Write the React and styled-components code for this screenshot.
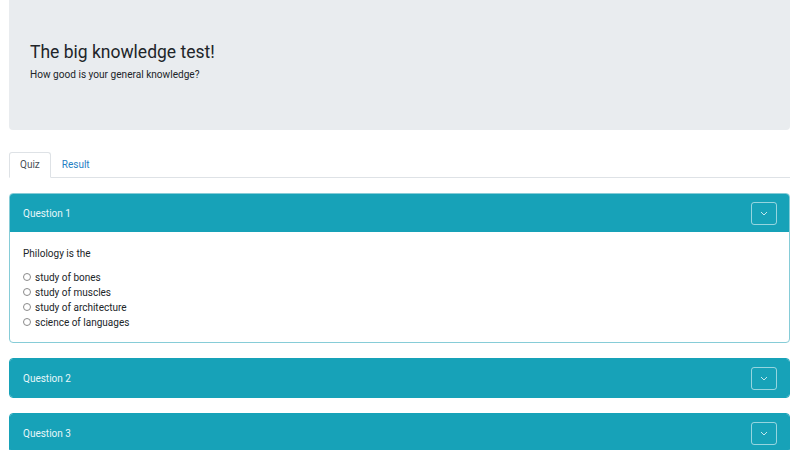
import React from "react";
import styled, { createGlobalStyle } from "styled-components";

const Global = createGlobalStyle`
  html, body { margin: 0; padding: 0; background: #fff; }
  body { font-family: Roboto, "Open Sans", sans-serif; color: #212529; font-size: 10px; }
  * { box-sizing: border-box; }
`;

const Page = styled.div`
  padding: 0 10px 0 9px;
`;

const Jumbotron = styled.header`
  background: #e9ecef;
  border-radius: 0 0 4px 4px;
  height: 130px;
  padding: 40px 20px 0 21px;
`;

const Title = styled.h1`
  margin: 0;
  font-size: 17.5px;
  font-weight: 400;
  line-height: 24px;
  color: #212529;
`;

const Lead = styled.p`
  margin: 4px 0 0;
  font-size: 10.1px;
  line-height: 14px;
`;

const Tabs = styled.nav`
  display: flex;
  margin-top: 22px;
  border-bottom: 1px solid #dee2e6;
  height: 26px;
`;

const Tab = styled.div`
  padding: 0 10px;
  height: 26px;
  line-height: 24px;
  font-size: 10px;
  border: 1px solid ${(p) => (p.$active ? "#dee2e6" : "transparent")};
  border-bottom-color: ${(p) => (p.$active ? "#fff" : "transparent")};
  border-radius: 3px 3px 0 0;
  background: ${(p) => (p.$active ? "#fff" : "transparent")};
  color: ${(p) => (p.$active ? "#495057" : "#1f7fc4")};
`;

const Cards = styled.div`
  display: flex;
  flex-direction: column;
  gap: 15px;
  margin-top: 15px;
`;

const Card = styled.section`
  border: 1px solid ${(p) => (p.$open ? "#86ccd7" : "#17a2b8")};
  border-radius: 4px;
  overflow: hidden;
`;

const CardHeader = styled.div`
  background: #17a2b8;
  height: 38px;
  display: flex;
  align-items: center;
  justify-content: space-between;
  padding: 0 12px 0 13px;
  color: #e8f7fa;
  font-size: 10px;
`;

const ToggleButton = styled.button`
  width: 26px;
  height: 23px;
  border: 1px solid rgba(255, 255, 255, 0.55);
  border-radius: 3px;
  background: transparent;
  display: flex;
  align-items: center;
  justify-content: center;
  padding: 0;
`;

const CardBody = styled.div`
  padding: 14px 13px 12px;
`;

const Question = styled.p`
  margin: 0 0 9px;
  line-height: 15px;
`;

const Option = styled.label`
  display: flex;
  align-items: center;
  height: 15px;
  gap: 4px;
`;

const Radio = styled.span`
  width: 8px;
  height: 8px;
  border-radius: 50%;
  border: 1px solid #8a8a8a;
  margin-top: -2px;
`;

const Chevron = () => (
  <svg width="8" height="5" viewBox="0 0 8 5" fill="none">
    <path d="M1 1l3 3 3-3" stroke="rgba(255,255,255,0.75)" strokeWidth="1" />
  </svg>
);

const options = ["study of bones", "study of muscles", "study of architecture", "science of languages"];

export default function App() {
  return (
    <Page>
      <Global />
      <Jumbotron>
        <Title>The big knowledge test!</Title>
        <Lead>How good is your general knowledge?</Lead>
      </Jumbotron>
      <Tabs>
        <Tab $active>Quiz</Tab>
        <Tab>Result</Tab>
      </Tabs>
      <Cards>
        <Card $open>
          <CardHeader>
            Question 1
            <ToggleButton><Chevron /></ToggleButton>
          </CardHeader>
          <CardBody>
            <Question>Philology is the</Question>
            {options.map((o) => (
              <Option key={o}>
                <Radio />
                {o}
              </Option>
            ))}
          </CardBody>
        </Card>
        <Card>
          <CardHeader>
            Question 2
            <ToggleButton><Chevron /></ToggleButton>
          </CardHeader>
        </Card>
        <Card>
          <CardHeader>
            Question 3
            <ToggleButton><Chevron /></ToggleButton>
          </CardHeader>
        </Card>
      </Cards>
    </Page>
  );
}
